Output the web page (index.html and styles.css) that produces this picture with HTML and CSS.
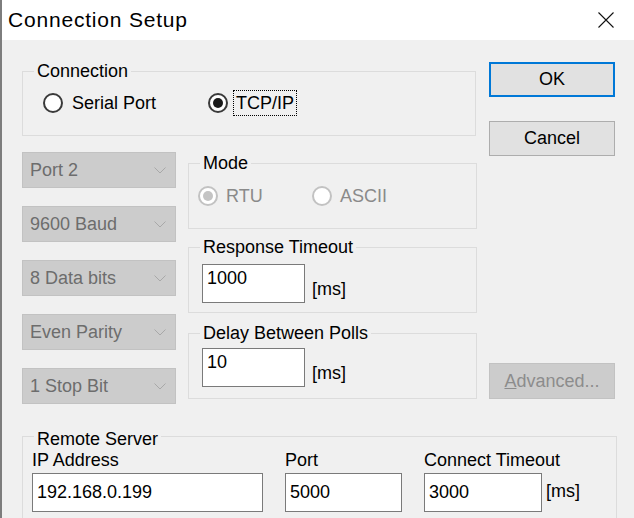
FILE: index.html
```html
<!DOCTYPE html>
<html lang="en">
<head>
    <meta charset="UTF-8">
    <meta name="viewport" content="width=device-width, initial-scale=1.0">
    <title>Connection Setup</title>
    <link rel="stylesheet" href="styles.css">
</head>
<body>
    <div class="window">
        <div class="titlebar">
            <span class="title">Connection Setup</span>
            <svg class="close" width="16" height="16" viewBox="0 0 16 16">
                <path d="M0.5 0.5L15.5 15.5M15.5 0.5L0.5 15.5" stroke="#111" stroke-width="1.1" fill="none"/>
            </svg>
        </div>

        <div class="dialog">
            <div class="main">
                <div class="left">
                    <fieldset class="group connection">
                        <legend>Connection</legend>
                        <div class="radio-row">
                            <label class="option serial"><span class="radio"></span>Serial Port</label>
                            <label class="option"><span class="radio checked"></span><span class="focus">TCP/IP</span></label>
                        </div>
                    </fieldset>

                    <div class="middle">
                        <div class="combos">
                            <div class="combo">Port 2 <svg class="chevron" width="12" height="7" viewBox="0 0 12 7"><polyline points="0.5,0.5 6,6 11.5,0.5" fill="none" stroke="#a8a8a8"/></svg></div>
                            <div class="combo">9600 Baud <svg class="chevron" width="12" height="7" viewBox="0 0 12 7"><polyline points="0.5,0.5 6,6 11.5,0.5" fill="none" stroke="#a8a8a8"/></svg></div>
                            <div class="combo">8 Data bits <svg class="chevron" width="12" height="7" viewBox="0 0 12 7"><polyline points="0.5,0.5 6,6 11.5,0.5" fill="none" stroke="#a8a8a8"/></svg></div>
                            <div class="combo">Even Parity <svg class="chevron" width="12" height="7" viewBox="0 0 12 7"><polyline points="0.5,0.5 6,6 11.5,0.5" fill="none" stroke="#a8a8a8"/></svg></div>
                            <div class="combo">1 Stop Bit <svg class="chevron" width="12" height="7" viewBox="0 0 12 7"><polyline points="0.5,0.5 6,6 11.5,0.5" fill="none" stroke="#a8a8a8"/></svg></div>
                        </div>

                        <div class="groups">
                            <fieldset class="group mode">
                                <legend>Mode</legend>
                                <div class="radio-row">
                                    <label class="option rtu disabled"><span class="radio dis-checked"></span>RTU</label>
                                    <label class="option disabled"><span class="radio dis"></span>ASCII</label>
                                </div>
                            </fieldset>

                            <fieldset class="group timeout">
                                <legend>Response Timeout</legend>
                                <div class="field-row">
                                    <input class="textbox short" type="text" value="1000">
                                    <span class="unit">[ms]</span>
                                </div>
                            </fieldset>

                            <fieldset class="group delay">
                                <legend>Delay Between Polls</legend>
                                <div class="field-row">
                                    <input class="textbox short" type="text" value="10">
                                    <span class="unit">[ms]</span>
                                </div>
                            </fieldset>
                        </div>
                    </div>
                </div>

                <div class="buttons">
                    <button class="btn default">OK</button>
                    <button class="btn cancel">Cancel</button>
                    <button class="btn advanced" disabled><u>A</u>dvanced...</button>
                </div>
            </div>

            <fieldset class="group remote">
                <legend>Remote Server</legend>
                <div class="server-row">
                    <div class="field ip">
                        <label>IP Address</label>
                        <input class="textbox" type="text" value="192.168.0.199">
                    </div>
                    <div class="field port">
                        <label>Port</label>
                        <input class="textbox" type="text" value="5000">
                    </div>
                    <div class="field conn">
                        <label>Connect Timeout</label>
                        <input class="textbox" type="text" value="3000">
                    </div>
                    <span class="unit remote-unit">[ms]</span>
                </div>
            </fieldset>
        </div>
    </div>
</body>
</html>
```

FILE: styles.css
```css
body {
    margin: 0;
    width: 634px;
    height: 518px;
    overflow: hidden;
    background-color: #f0f0f0;
    font-family: "Liberation Sans", Arial, sans-serif;
    font-size: 18px;
    color: #000;
}

.window {
    height: 518px;
    border-left: 2px solid #7d7d7d;
    box-sizing: border-box;
    overflow: hidden;
}

.titlebar {
    height: 40px;
    background-color: #fff;
    display: flex;
    align-items: center;
    justify-content: space-between;
    padding: 0 20px 0 6px;
}

.title {
    font-size: 21px;
    letter-spacing: 0.8px;
}

.close {
    display: block;
}

.dialog {
    padding: 0 17px 0 20px;
}

.main {
    display: flex;
}

.left {
    width: 455px;
    margin-top: 21px;
}

/* group boxes */
.group {
    border: 1px solid #dcdcdc;
    margin: 0;
    padding: 0;
    min-width: 0;
}

.group legend {
    padding: 0 3px;
    margin-left: 11px;
    line-height: 20px;
    white-space: nowrap;
}

.connection {
    width: 454px;
    box-sizing: border-box;
}

.radio-row {
    display: flex;
    align-items: center;
    height: 20px;
}

.connection .radio-row {
    padding: 12px 0 22px 20px;
}

.option {
    display: flex;
    align-items: center;
    line-height: 20px;
    white-space: nowrap;
}

.option.serial {
    width: 165px;
}

.radio {
    width: 20px;
    height: 20px;
    box-sizing: border-box;
    border-radius: 50%;
    border: 2px solid #3a3a3a;
    background-color: #fff;
    margin-right: 9px;
    position: relative;
}

.radio.checked::after {
    content: "";
    position: absolute;
    left: 3px;
    top: 3px;
    width: 10px;
    height: 10px;
    border-radius: 50%;
    background-color: #1a1a1a;
}

.radio.dis {
    border-color: #c2c2c2;
}

.radio.dis-checked {
    border-color: #c2c2c2;
}

.radio.dis-checked::after {
    content: "";
    position: absolute;
    left: 3px;
    top: 3px;
    width: 10px;
    height: 10px;
    border-radius: 50%;
    background-color: #c4c4c4;
}

.focus {
    border: 1px dotted #000;
    padding: 1px 2px;
    line-height: 22px;
    margin-left: -4px;
}

.disabled {
    color: #8a8a8a;
}

/* middle part */
.middle {
    display: flex;
    margin-top: 16px;
}

.combos {
    width: 154px;
    display: flex;
    flex-direction: column;
    gap: 18px;
}

.combo {
    height: 36px;
    box-sizing: border-box;
    background-color: #cccccc;
    border: 1px solid #c2c2c2;
    color: #6d6d6d;
    display: flex;
    align-items: center;
    justify-content: space-between;
    padding: 0 9px 0 7px;
    white-space: nowrap;
}

.chevron {
    display: block;
}

.groups {
    width: 289px;
    margin-left: 12px;
    margin-top: 1px;
}

.mode .radio-row {
    padding: 13px 0 22px 9px;
}

.option.rtu {
    width: 114px;
}

.mode .radio {
    margin-right: 8px;
}

.timeout {
    margin-top: 8px;
}

.timeout .field-row {
    padding: 7px 0 9px 13px;
}

.delay {
    margin-top: 10px;
}

.delay .field-row {
    padding: 5px 0 11px 13px;
}

.field-row {
    display: flex;
    align-items: flex-end;
}

.textbox {
    font: inherit;
    color: #000;
    background-color: #fff;
    border: 1px solid #7a7a7a;
    box-sizing: border-box;
    height: 39px;
    padding: 0 4px;
    margin: 0;
    outline: none;
}

.textbox.short {
    width: 103px;
    padding-bottom: 10px;
}

.unit {
    margin-left: 7px;
    margin-bottom: 4px;
    line-height: 20px;
    white-space: nowrap;
}

/* right buttons */
.buttons {
    width: 126px;
    margin-left: 12px;
    display: flex;
    flex-direction: column;
}

.btn {
    font: inherit;
    color: #000;
    width: 126px;
    height: 35px;
    box-sizing: border-box;
    background-color: #e1e1e1;
    border: 1px solid #adadad;
    padding: 0;
}

.btn.default {
    margin-top: 22px;
    border: 2px solid #0078d7;
}

.btn.cancel {
    margin-top: 24px;
}

.btn.advanced {
    margin-top: 207px;
    height: 36px;
    background-color: #cccccc;
    border-color: #c2c2c2;
    color: #8c8c8c;
}

/* remote server */
.remote {
    margin-top: 19px;
}

.remote legend {
    padding-top: 6px;
}

.server-row {
    display: flex;
    padding: 1px 0 8px 9px;
}

.field {
    display: flex;
    flex-direction: column;
}

.field label {
    line-height: 20px;
    margin-bottom: 3px;
    white-space: nowrap;
}

.field.ip {
    width: 231px;
}

.field.port {
    width: 117px;
    margin-left: 22px;
}

.field.conn {
    width: 118px;
    margin-left: 22px;
}

.field .textbox {
    width: 100%;
}

.remote-unit {
    align-self: flex-end;
    margin-left: 4px;
    margin-bottom: 11px;
}
```
